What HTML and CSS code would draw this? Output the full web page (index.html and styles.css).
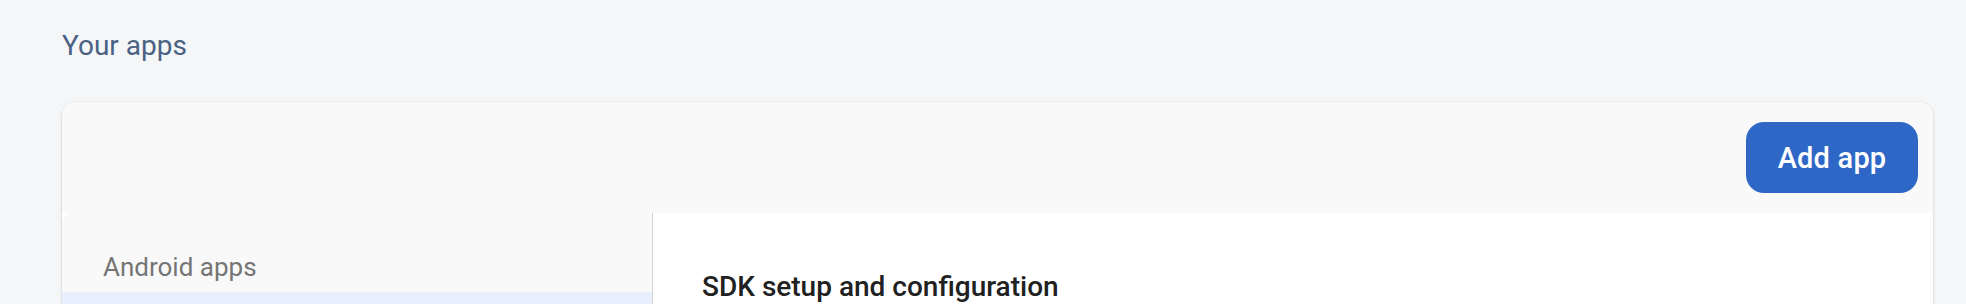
FILE: index.html
```html
<!DOCTYPE html>
<html lang="en">
<head>
<meta charset="utf-8">
<title>Your apps</title>
<link rel="stylesheet" href="styles.css">
</head>
<body>
<main class="page">
  <h1 class="page-title">Your apps</h1>
  <section class="card">
    <div class="card-header">
      <button class="btn-primary" type="button">Add app</button>
    </div>
    <div class="card-body">
      <nav class="sidebar">
        <div class="sidebar-label">Android apps</div>
        <div class="sidebar-item active"></div>
      </nav>
      <div class="content">
        <h2 class="content-title">SDK setup and configuration</h2>
      </div>
    </div>
  </section>
</main>
</body>
</html>
```
FILE: styles.css
```css
html, body {
  margin: 0;
  padding: 0;
  background: #f5f6f8;
  font-family: Roboto, "Liberation Sans", Arial, sans-serif;
  overflow: hidden;
}

.page {
  padding: 28px 33px 0 62px;
}

.page-title {
  margin: 0 0 38px;
  font-size: 28px;
  line-height: 36px;
  font-weight: 400;
  color: #4a6182;
}

.card {
  background: #ffffff;
  border-radius: 13px;
  box-shadow: 0 1px 3px rgba(0, 0, 0, 0.18), 0 0 1px rgba(0, 0, 0, 0.12);
  overflow: hidden;
}

.card-header {
  background: #f9f9f9;
  display: flex;
  justify-content: flex-end;
  padding: 20px 15px 20px;
}

.btn-primary {
  width: 172px;
  height: 71px;
  border: none;
  border-radius: 18px;
  background: #2f67c7;
  color: #ffffff;
  font-family: Roboto, "Liberation Sans", Arial, sans-serif;
  font-size: 29px;
  font-weight: 500;
  letter-spacing: 0.2px;
  padding: 0;
  cursor: pointer;
}

.card-body {
  display: flex;
  background: #ffffff;
  min-height: 120px;
}

.sidebar {
  width: 590px;
  flex: none;
  background: #f9f9f9;
  border-right: 1px solid #d2d2d2;
  border-top-left-radius: 10px;
  padding-top: 38px;
}

.sidebar-label {
  padding-left: 41px;
  font-size: 26px;
  line-height: 32px;
  color: #757575;
  margin-bottom: 9px;
}

.sidebar-item {
  height: 60px;
}

.sidebar-item.active {
  background: #e8f0fe;
}

.content {
  flex: 1;
  padding: 58px 0 0 49px;
}

.content-title {
  margin: 0;
  font-size: 28px;
  line-height: 32px;
  font-weight: 500;
  color: #212121;
}
```
